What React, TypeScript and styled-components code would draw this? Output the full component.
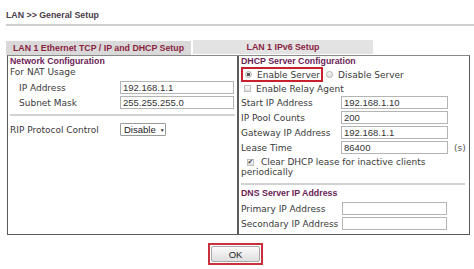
import React from 'react';
import styled, { createGlobalStyle } from 'styled-components';

const GlobalStyle = createGlobalStyle`
  html, body {
    margin: 0;
    padding: 0;
    background: #ffffff;
  }
  body {
    font-family: 'DejaVu Sans', Verdana, sans-serif;
    font-size: 9px;
    color: #3a3a3a;
  }
`;

const Page = styled.div`
  width: 474px;
  height: 269px;
  padding: 9px 0 0 6px;
  box-sizing: border-box;
  overflow: hidden;
`;

const Title = styled.div`
  font-family: 'Liberation Sans', Arial, sans-serif;
  font-weight: 700;
  font-size: 8.8px;
  line-height: 12px;
  color: #4b3c4b;
`;

const Rule = styled.div`
  height: 2px;
  background: #cfcfcf;
  margin-top: 3px;
`;

const Tabs = styled.div`
  display: flex;
  gap: 2px;
  margin-top: 14px;
`;

const Tab = styled.div<{ $width: number; $active?: boolean }>`
  width: ${(p) => p.$width}px;
  height: 14px;
  background: ${(p) => (p.$active ? '#d9d9d9' : '#e3e3e3')};
  display: flex;
  align-items: center;
  justify-content: center;
  font-family: 'Liberation Sans', Arial, sans-serif;
  font-weight: 700;
  font-size: 8.8px;
  color: #8a1f3f;
  margin-top: ${(p) => (p.$active ? 1 : 0)}px;
`;

const Table = styled.div`
  display: grid;
  grid-template-columns: 229px 230px;
  width: 461px;
  margin-left: 1px;
  border: 1px solid #5a5a5a;
  border-top-color: #8a8a8a;
`;

const Cell = styled.div<{ $divider?: boolean }>`
  display: flex;
  flex-direction: column;
  padding: 0 2px 2px 2px;
  border-left: ${(p) => (p.$divider ? '2px solid #5a5a5a' : 'none')};
  min-height: 176px;
`;

const Heading = styled.div`
  font-family: 'Liberation Sans', Arial, sans-serif;
  font-weight: 700;
  font-size: 8.8px;
  line-height: 11px;
  color: #6b2357;
`;

const Line = styled.div<{ $indent?: number }>`
  line-height: 11px;
  padding-left: ${(p) => p.$indent || 0}px;
  white-space: nowrap;
`;

const FieldRow = styled.div<{ $label: number }>`
  display: grid;
  grid-template-columns: ${(p) => p.$label}px auto 1fr;
  align-items: center;
  height: 15px;
  white-space: nowrap;
`;

const Label = styled.span<{ $indent?: number }>`
  padding-left: ${(p) => p.$indent || 0}px;
`;

const TextBox = styled.div<{ $width: number }>`
  width: ${(p) => p.$width}px;
  height: 13px;
  box-sizing: border-box;
  border: 1px solid #b4b4b4;
  background: #fff;
  font-family: 'Liberation Sans', Arial, sans-serif;
  font-size: 9.5px;
  line-height: 11px;
  color: #333;
  padding-left: 2px;
`;

const Unit = styled.span`
  padding-left: 6px;
  color: #555;
`;

const Select = styled.div`
  display: flex;
  align-items: center;
  gap: 4px;
  width: 46px;
  height: 13px;
  box-sizing: border-box;
  border: 1px solid #9a9a9a;
  border-radius: 1px;
  padding-left: 3px;
  font-family: 'Liberation Sans', Arial, sans-serif;
  font-size: 9.5px;
  color: #222;
`;

const Caret = styled.span`
  font-size: 5px;
  color: #333;
`;

const Divider = styled.div<{ $top: number; $bottom: number }>`
  height: 2px;
  background: #d2d2d2;
  margin: ${(p) => p.$top}px 0 ${(p) => p.$bottom}px 0;
`;

const OptionRow = styled.div`
  display: flex;
  align-items: center;
  height: 15px;
  white-space: nowrap;
`;

const Highlight = styled.div`
  display: flex;
  align-items: center;
  gap: 5px;
  height: 15px;
  box-sizing: border-box;
  border: 2px solid #c8202e;
  padding: 0 1px 0 2px;
`;

const Choice = styled.div<{ $indent?: number }>`
  display: flex;
  align-items: center;
  gap: 5px;
  padding-left: ${(p) => p.$indent || 0}px;
`;

const Radio = styled.span<{ $checked?: boolean }>`
  width: 7px;
  height: 7px;
  border-radius: 50%;
  box-sizing: border-box;
  border: 1px solid #b0b0b0;
  background: ${(p) =>
    p.$checked ? 'radial-gradient(circle, #555 0 1.6px, #eee 2px)' : 'linear-gradient(#fafafa, #dcdcdc)'};
`;

const Check = styled.span<{ $checked?: boolean }>`
  width: 7px;
  height: 7px;
  box-sizing: border-box;
  border: 1px solid #bdbdbd;
  background: linear-gradient(#fdfdfd, #e2e2e2);
  display: flex;
  align-items: center;
  justify-content: center;
  font-size: 7px;
  line-height: 7px;
  color: #444;
`;

const Wrapped = styled.div`
  line-height: 10px;
  padding-top: 2px;
`;

const Footer = styled.div`
  display: flex;
  justify-content: center;
  width: 459px;
  margin-top: 8px;
`;

const OkFrame = styled.div`
  border: 2px solid #c8303c;
  padding: 1px;
`;

const OkButton = styled.div`
  width: 49px;
  height: 16px;
  box-sizing: border-box;
  border: 1px solid #a8a8a8;
  border-radius: 2px;
  background: linear-gradient(#fbfbfb, #dedede);
  display: flex;
  align-items: center;
  justify-content: center;
  font-family: 'Liberation Sans', Arial, sans-serif;
  font-size: 9.5px;
  color: #222;
`;

const lanFields = [
  { label: 'IP Address', value: '192.168.1.1' },
  { label: 'Subnet Mask', value: '255.255.255.0' },
];

const dhcpFields = [
  { label: 'Start IP Address', value: '192.168.1.10' },
  { label: 'IP Pool Counts', value: '200' },
  { label: 'Gateway IP Address', value: '192.168.1.1' },
  { label: 'Lease Time', value: '86400', unit: '(s)' },
];

const dnsFields = ['Primary IP Address', 'Secondary IP Address'];

export default function App() {
  return (
    <>
      <GlobalStyle />
      <Page>
        <Title>LAN &gt;&gt; General Setup</Title>
        <Rule />
        <Tabs>
          <Tab $width={185} $active>
            LAN 1 Ethernet TCP / IP and DHCP Setup
          </Tab>
          <Tab $width={180}>LAN 1 IPv6 Setup</Tab>
        </Tabs>
        <Table>
          <Cell>
            <Heading>Network Configuration</Heading>
            <Line>For NAT Usage</Line>
            <div style={{ height: 2 }} />
            {lanFields.map((f) => (
              <FieldRow key={f.label} $label={110}>
                <Label $indent={9}>{f.label}</Label>
                <TextBox $width={114}>{f.value}</TextBox>
              </FieldRow>
            ))}
            <Divider $top={4} $bottom={6} />
            <FieldRow $label={110}>
              <Label>RIP Protocol Control</Label>
              <Select>
                Disable <Caret>▼</Caret>
              </Select>
            </FieldRow>
          </Cell>
          <Cell $divider>
            <Heading>DHCP Server Configuration</Heading>
            <OptionRow>
              <Highlight>
                <Choice>
                  <Radio $checked />
                  Enable Server
                </Choice>
              </Highlight>
              <Choice $indent={3}>
                <Radio />
                Disable Server
              </Choice>
            </OptionRow>
            <OptionRow style={{ height: 13 }}>
              <Choice $indent={3}>
                <Check />
                Enable Relay Agent
              </Choice>
            </OptionRow>
            {dhcpFields.map((f) => (
              <FieldRow key={f.label} $label={100}>
                <Label>{f.label}</Label>
                <TextBox $width={107}>{f.value}</TextBox>
                {f.unit && <Unit>{f.unit}</Unit>}
              </FieldRow>
            ))}
            <Wrapped>
              <Choice $indent={6} style={{ gap: 7 }}>
                <Check $checked>✔</Check>
                Clear DHCP lease for inactive clients
              </Choice>
              periodically
            </Wrapped>
            <Divider $top={6} $bottom={3} />
            <Heading>DNS Server IP Address</Heading>
            <div style={{ height: 2 }} />
            {dnsFields.map((label) => (
              <FieldRow key={label} $label={101}>
                <Label>{label}</Label>
                <TextBox $width={105} />
              </FieldRow>
            ))}
          </Cell>
        </Table>
        <Footer>
          <OkFrame>
            <OkButton>OK</OkButton>
          </OkFrame>
        </Footer>
      </Page>
    </>
  );
}
